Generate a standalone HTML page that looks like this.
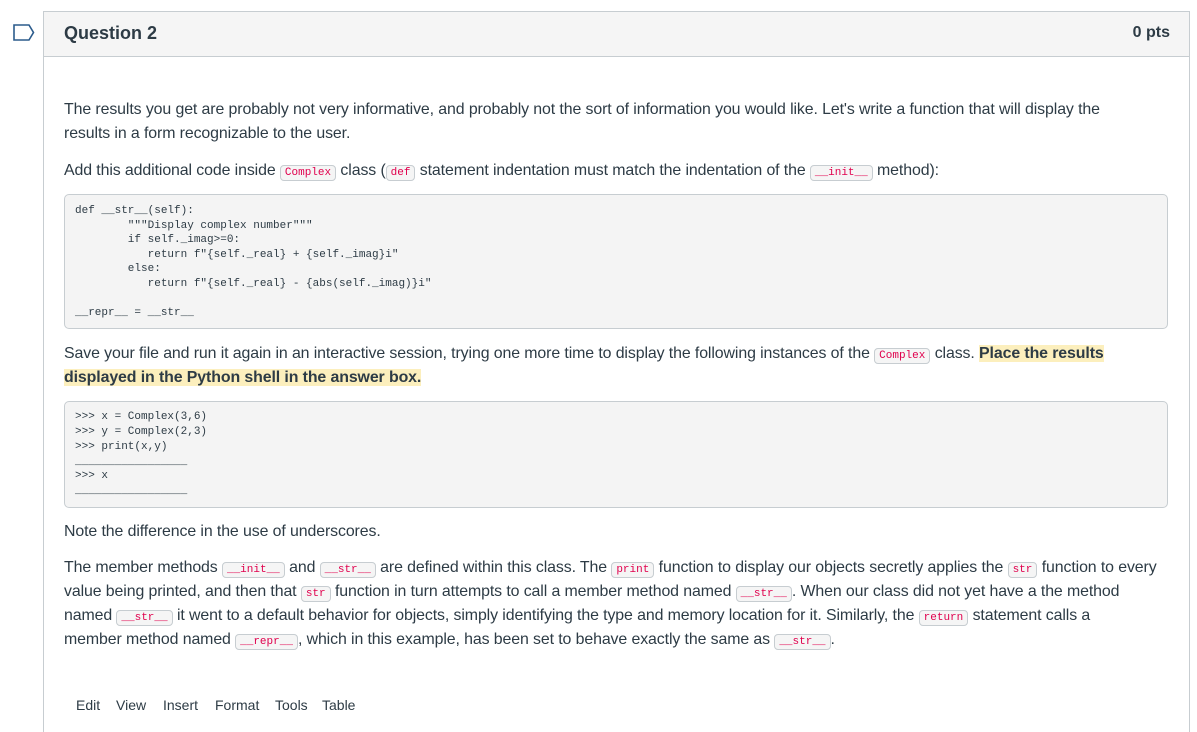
<!DOCTYPE html>
<html><head><meta charset="utf-8"><style>
body{margin:0;width:1197px;height:715px;overflow:hidden;background:#fff;font-family:"Liberation Sans",sans-serif;color:#2d3b45;position:relative}
.box{position:absolute;left:43px;top:11px;width:1145px;height:720px;border:1px solid #c7cdd1;border-bottom:none}
.hdr{position:absolute;left:0;top:0;right:0;height:44px;background:#f5f5f5;border-bottom:1px solid #c7cdd1}
.hdr .t{position:absolute;left:20px;top:11px;font-size:18px;font-weight:bold;color:#2d3b45}
.hdr .p{position:absolute;right:19px;top:12px;font-size:16px;font-weight:bold}
.l{position:absolute;left:64px;font-size:15.9px;white-space:nowrap;line-height:20px;letter-spacing:-0.1px}
code{font-family:"Liberation Mono",monospace;font-size:11px;color:#e0004d;background:#f5f5f5;border:1px solid #c7cdd1;border-radius:4px;padding:1px 4px;letter-spacing:0}
.pre{position:absolute;left:64px;width:1102px;background:#f4f4f4;border:1px solid #c7cdd1;border-radius:5px}
.pre div{position:absolute;left:10px;font-family:"Liberation Mono",monospace;font-size:11px;white-space:pre;color:#2d3b45}
.hl{background:#fcefbd;font-weight:bold}
.tb{position:absolute;top:697px;font-size:14px;color:#2d3b45}
</style></head><body>
<svg style="position:absolute;left:13px;top:24px" width="22" height="18"><path d="M1 1H16L20.5 8.5L16 16H1Z" fill="none" stroke="#2b5b8c" stroke-width="1.6"/></svg>
<div class="box"><div class="hdr"><span class="t">Question 2</span><span class="p">0 pts</span></div></div>
<div class="l" style="top:100px">The results you get are probably not very informative, and probably not the sort of information you would like. Let's write a function that will display the</div>
<div class="l" style="top:124px">results in a form recognizable to the user.</div>
<div class="l" style="top:161px">Add this additional code inside <code>Complex</code> class (<code>def</code> statement indentation must match the indentation of the <code>__init__</code> method):</div>
<div class="pre" style="top:194px;height:133px">
<div style="top:10px">def __str__(self):</div>
<div style="top:25px">        """Display complex number"""</div>
<div style="top:39px">        if self._imag&gt;=0:</div>
<div style="top:54px">           return f"{self._real} + {self._imag}i"</div>
<div style="top:68px">        else:</div>
<div style="top:83px">           return f"{self._real} - {abs(self._imag)}i"</div>
<div style="top:112px">__repr__ = __str__</div>
</div>
<div class="l" style="top:344px">Save your file and run it again in an interactive session, trying one more time to display the following instances of the <code>Complex</code> class. <span class="hl">Place the results</span></div>
<div class="l" style="top:368px"><span class="hl">displayed in the Python shell in the answer box. </span></div>
<div class="pre" style="top:401px;height:105px">
<div style="top:9px">&gt;&gt;&gt; x = Complex(3,6)</div>
<div style="top:24px">&gt;&gt;&gt; y = Complex(2,3)</div>
<div style="top:39px">&gt;&gt;&gt; print(x,y)</div>
<div style="top:54px">_________________</div>
<div style="top:68px">&gt;&gt;&gt; x</div>
<div style="top:83px">_________________</div>
</div>
<div class="l" style="top:522px">Note the difference in the use of underscores.</div>
<div class="l" style="top:558px">The member methods <code>__init__</code> and <code>__str__</code> are defined within this class. The <code>print</code> function to display our objects secretly applies the <code>str</code> function to every</div>
<div class="l" style="top:582px">value being printed, and then that <code>str</code> function in turn attempts to call a member method named <code>__str__</code>. When our class did not yet have a the method</div>
<div class="l" style="top:606px">named <code>__str__</code> it went to a default behavior for objects, simply identifying the type and memory location for it. Similarly, the <code>return</code> statement calls a</div>
<div class="l" style="top:630px">member method named <code>__repr__</code>, which in this example, has been set to behave exactly the same as <code>__str__</code>.</div>
<span class="tb" style="left:76px">Edit</span><span class="tb" style="left:116px">View</span><span class="tb" style="left:163px">Insert</span><span class="tb" style="left:215px">Format</span><span class="tb" style="left:275px">Tools</span><span class="tb" style="left:322px">Table</span>
</body></html>
